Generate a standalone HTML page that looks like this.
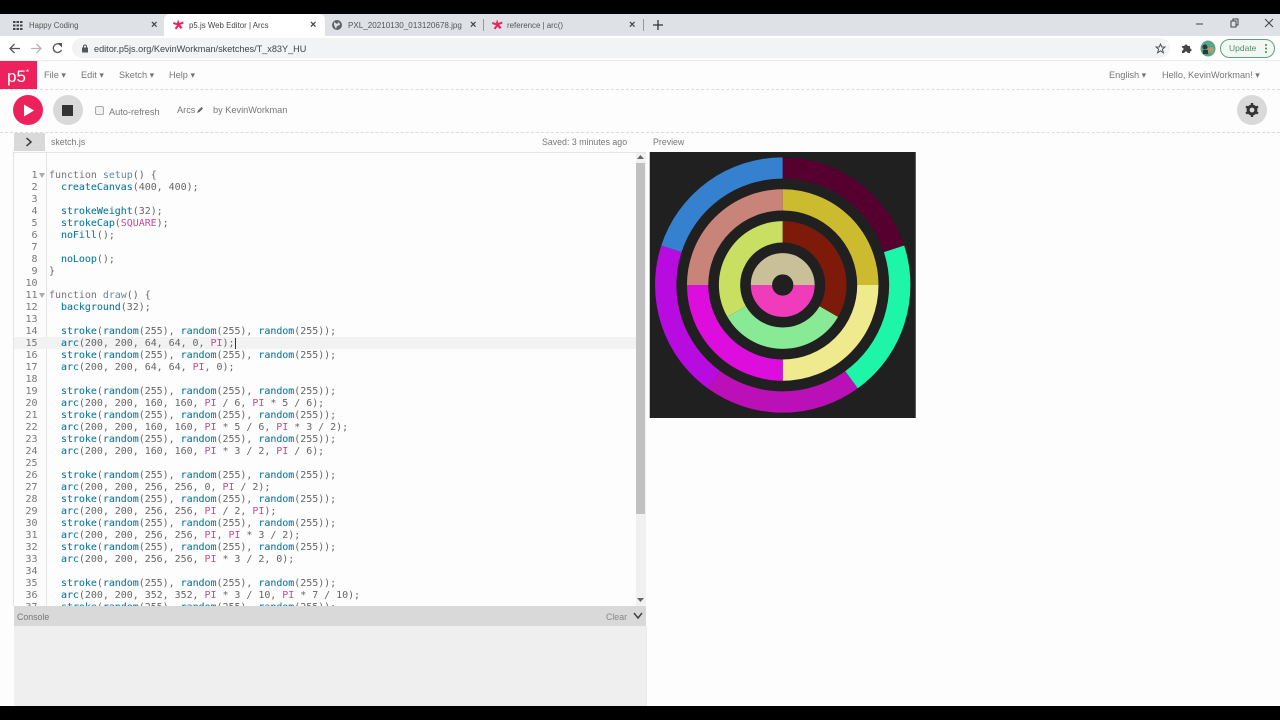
<!DOCTYPE html>
<html><head><meta charset="utf-8"><style>
html,body{margin:0;padding:0;width:1280px;height:720px;overflow:hidden;background:#fdfdfd;font-family:"Liberation Sans",sans-serif;color:#777}
.a{position:absolute;white-space:nowrap}
.t{font-size:7.9px;line-height:12px}
.u{font-size:9.2px;line-height:12px;color:#777}
pre{margin:0;font-family:"DejaVu Sans Mono","Liberation Mono",monospace;font-size:10px;line-height:12px;color:#666;letter-spacing:-.04px}
pre.a{white-space:pre}
pre i{font-style:normal;color:#0f7a9f;-webkit-text-stroke:.1px #0f7a9f}
pre b{font-weight:normal;color:#c84b8f}
pre u{text-decoration:none;color:#777}
pre s{text-decoration:none;color:#5d8ca0}
.dot{height:0;border-top:1px dashed #dcdcdc;left:0;width:1280px}
.x{font-size:11px;color:#444;line-height:12px;font-weight:bold}
</style></head><body>
<div class="a" style="left:0;top:0;width:1280px;height:14px;background:#000"></div>
<div class="a" style="left:0;top:14px;width:1280px;height:22px;background:#dee1e6"></div>
<div class="a" style="left:0;top:36px;width:1280px;height:25px;background:#fff"></div>
<div class="a" style="left:164px;top:14px;width:161px;height:22px;background:#fff;border-radius:6px 6px 0 0"></div>
<svg class="a" style="left:12px;top:20px" width="12" height="11"><g fill="#444"><rect x="1" y="1" width="2.500" height="2"/><rect x="4.500" y="1" width="2.500" height="2"/><rect x="8" y="1" width="2.500" height="2"/><rect x="1" y="4.500" width="2.500" height="2"/><rect x="4.500" y="4.500" width="2.500" height="2"/><rect x="8" y="4.500" width="2.500" height="2"/><rect x="1" y="8" width="2.500" height="2"/><rect x="4.500" y="8" width="2.500" height="2"/><rect x="8" y="8" width="2.500" height="2"/></g></svg>
<div class="a t" style="left:29px;top:20px;color:#555;font-size:7.800px">Happy Coding</div>
<div class="a x" style="left:151px;top:19px">×</div>
<svg class="a" style="left:172px;top:19px" width="12" height="12" viewBox="0 0 12 12"><path d="M6 .5l1.500 3.500 3.500-1.500 .5 2-3.300 1.300 2.300 3-1.800 1.200L6.500 7.500 4.500 10.500 2.700 9.300 5 6.300 1 5l.6-2L5 4.300z" fill="#ed225d"/></svg>
<div class="a t" style="left:189px;top:20px;color:#444">p5.js Web Editor | Arcs</div>
<div class="a x" style="left:310px;top:19px">×</div>
<svg class="a" style="left:332px;top:20px" width="10" height="10"><circle cx="5" cy="5" r="5" fill="#5f6368"/><path d="M2 2l3 2 2-2 1 3-3 1-1 3-2-4z" fill="#dee1e6"/></svg>
<div class="a t" style="left:348px;top:20px;width:116px;overflow:hidden;color:#555;font-size:8.100px">PXL_20210130_013120678.jpg (3024</div>
<div class="a x" style="left:470px;top:19px">×</div>
<div class="a" style="left:483px;top:19px;width:1px;height:12px;background:#999"></div>
<svg class="a" style="left:491px;top:19px" width="12" height="12" viewBox="0 0 12 12"><path d="M6 .5l1.500 3.500 3.500-1.500 .5 2-3.300 1.300 2.300 3-1.800 1.200L6.500 7.500 4.500 10.500 2.700 9.300 5 6.300 1 5l.6-2L5 4.300z" fill="#ed225d"/></svg>
<div class="a t" style="left:507px;top:20px;color:#555">reference | arc()</div>
<div class="a x" style="left:629px;top:19px">×</div>
<div class="a" style="left:643px;top:19px;width:1px;height:12px;background:#999"></div>
<svg class="a" style="left:653px;top:20px" width="10" height="10"><path d="M5 0v10M0 5h10" stroke="#333" stroke-width="1.300"/></svg>
<svg class="a" style="left:1195px;top:17px" width="80" height="14"><path d="M1 7h7" stroke="#444"/><path d="M36 4h5v6h-5zM38 4V2h5v6h-2" fill="none" stroke="#444"/><path d="M70 2l8 8M78 2l-8 8" stroke="#444"/></svg>

<svg class="a" style="left:8px;top:42px" width="60" height="13"><path d="M12 6.500H2M6.500 2L2 6.500 6.500 11" fill="none" stroke="#555" stroke-width="1.300"/><path d="M33 6.500H23M28.500 2L33 6.500 28.500 11" fill="none" stroke="#b5b5b5" stroke-width="1.300"/><path d="M53 3.500A4.300 4.300 0 1 0 53.500 8" fill="none" stroke="#555" stroke-width="1.300"/><path d="M49.500 1l4.500 0v4.500z" fill="#555"/></svg>
<div class="a" style="left:72px;top:38px;width:1098px;height:20px;background:#f1f3f4;border-radius:10px"></div>
<svg class="a" style="left:81px;top:44px" width="8" height="9"><rect x="1" y="3.500" width="6" height="5" fill="#555"/><path d="M2.500 4V2.500a1.500 1.500 0 0 1 3 0V4" fill="none" stroke="#555"/></svg>
<div class="a" style="left:94px;top:43px;font-size:9.150px;line-height:12px;color:#444">editor.p5js.org/KevinWorkman/sketches/T_x83Y_HU</div>
<svg class="a" style="left:1155px;top:43px" width="11" height="11" viewBox="0 0 11 11"><path d="M5.500 1l1.300 3h3.200L7.400 6.200 8.400 9.800 5.500 7.800 2.600 9.800 3.600 6.200 1 4h3.200z" fill="none" stroke="#555"/></svg>
<svg class="a" style="left:1181px;top:43px" width="11" height="11" viewBox="0 0 11 11"><path d="M1 3h2.500a1.500 1.500 0 0 1 3 0H9v2.500a1.500 1.500 0 0 1 0 3V10H6.500a1.500 1.500 0 0 0-3 0H1V7.500a1.500 1.500 0 0 0 0-3z" fill="#444"/></svg>
<svg class="a" style="left:1200px;top:40px" width="16" height="17"><ellipse cx="8" cy="8.500" rx="7.500" ry="8" fill="#5aa58a"/><circle cx="5" cy="7" r="2.500" fill="#333"/><circle cx="11" cy="10" r="3" fill="#b59a72"/><rect x="3" y="10" width="5" height="4" fill="#333"/></svg>
<div class="a" style="left:1220px;top:39px;width:53px;height:17px;border:1px solid #5f9d7c;border-radius:10px;background:#f2f7f3"></div>
<div class="a" style="left:1229px;top:42px;font-size:8.500px;line-height:12px;color:#4f8f6c">Update</div>
<svg class="a" style="left:1264px;top:43px" width="4" height="11"><g fill="#3c8a5f"><circle cx="2" cy="2" r="1"/><circle cx="2" cy="5.500" r="1"/><circle cx="2" cy="9" r="1"/></g></svg>

<div class="a" style="left:0;top:60px;width:1280px;height:1px;background:#ececec"></div>
<div class="a" style="left:0;top:61px;width:37px;height:28px;background:#ed225d"></div>
<div class="a" style="left:7px;top:63px;font-size:17px;line-height:20px;color:#fff">p5<span style="font-size:8px;vertical-align:7px">*</span></div>
<div class="a dot" style="top:89px"></div>
<div class="a u" style="left:44px;top:69px">File ▾</div>
<div class="a u" style="left:81px;top:69px">Edit ▾</div>
<div class="a u" style="left:119px;top:69px">Sketch ▾</div>
<div class="a u" style="left:169px;top:69px">Help ▾</div>
<div class="a u" style="left:1109px;top:69px">English ▾</div>
<div class="a u" style="left:1162px;top:69px">Hello, KevinWorkman! ▾</div>

<div class="a" style="left:13px;top:95px;width:30px;height:30px;border-radius:50%;background:#ed225d"></div>
<svg class="a" style="left:23px;top:104px" width="12" height="13"><path d="M1 .5L11 6.500 1 12.500z" fill="#fff"/></svg>
<div class="a" style="left:53px;top:95px;width:30px;height:30px;border-radius:50%;background:#d9d9d9"></div>
<div class="a" style="left:62px;top:105px;width:11px;height:11px;background:#333"></div>
<div class="a" style="left:95px;top:106px;width:7px;height:7px;border:1px solid #aaa;border-radius:2px;background:#f2f2f2"></div>
<div class="a u" style="left:109px;top:106px">Auto-refresh</div>
<div class="a u" style="left:177px;top:104px">Arcs</div>
<svg class="a" style="left:196px;top:106px" width="8" height="8"><path d="M1 7l1-2.500L5.500 1 7 2.500 3.500 6z" fill="#666"/></svg>
<div class="a u" style="left:213px;top:104px">by KevinWorkman</div>
<div class="a" style="left:1237px;top:95px;width:30px;height:30px;border-radius:50%;background:#d9d9d9"></div>
<svg class="a" style="left:1244px;top:102px" width="16" height="16" viewBox="0 0 16 16"><g stroke="#333" stroke-width="2.400"><path d="M8 1v14M2 4.500l12 7M14 4.500l-12 7"/></g><circle cx="8" cy="8" r="3.900" fill="#d9d9d9" stroke="#333" stroke-width="3"/></svg>
<div class="a dot" style="top:132px"></div>

<div class="a" style="left:14px;top:133px;width:31px;height:18px;background:#d9d9d9"></div>
<svg class="a" style="left:25px;top:137px" width="8" height="10"><path d="M1.500 1l4.500 4-4.500 4" fill="none" stroke="#333" stroke-width="1.500"/></svg>
<div class="a u" style="left:51px;top:136px;font-size:8.800px">sketch.js</div>
<div class="a u" style="left:542px;top:136px;font-size:8.800px">Saved: 3 minutes ago</div>
<div class="a u" style="left:653px;top:136px;font-size:8.800px">Preview</div>

<div class="a" style="left:13px;top:152px;width:633px;height:1px;background:#e4e4e4"></div>
<div class="a" style="left:13px;top:152px;width:1px;height:454px;background:#e4e4e4"></div>
<div class="a" style="left:46px;top:153px;width:1px;height:453px;background:#e4e4e4"></div>
<div class="a" style="left:14px;top:337px;width:622px;height:12px;background:#f2f2f2"></div>
<div class="a" style="left:235px;top:338px;width:1px;height:11px;background:#333"></div>
<div class="a" style="left:636px;top:153px;width:10px;height:453px;background:#f1f1f1"></div>
<div class="a" style="left:636px;top:163px;width:9px;height:351px;background:#c1c1c1"></div>
<svg class="a" style="left:637px;top:155px" width="7" height="5"><path d="M0 4l3.500-4L7 4z" fill="#666"/></svg>
<svg class="a" style="left:637px;top:598px" width="7" height="5"><path d="M0 0l3.500 4L7 0z" fill="#666"/></svg>
<svg class="a" style="left:39px;top:173px" width="6" height="5"><path d="M0 0h6L3 5z" fill="#aaa"/></svg>
<svg class="a" style="left:39px;top:293px" width="6" height="5"><path d="M0 0h6L3 5z" fill="#aaa"/></svg>

<div class="a" style="left:14px;top:153px;width:622px;height:453px;overflow:hidden">
<pre class="a" style="left:0;top:17px;width:23.500px;text-align:right;color:#777">1
2
3
4
5
6
7
8
9
10
11
12
13
14
15
16
17
18
19
20
21
22
23
24
25
26
27
28
29
30
31
32
33
34
35
36
37</pre>
<pre class="a" style="left:35px;top:17px"><u>function</u> <s>setup</s>() {
  <i>createCanvas</i>(400, 400);

  <i>strokeWeight</i>(32);
  <i>strokeCap</i>(<b>SQUARE</b>);
  <i>noFill</i>();

  <i>noLoop</i>();
}

<u>function</u> <s>draw</s>() {
  <i>background</i>(32);

  <i>stroke</i>(<i>random</i>(255), <i>random</i>(255), <i>random</i>(255));
  <i>arc</i>(200, 200, 64, 64, 0, <b>PI</b>);
  <i>stroke</i>(<i>random</i>(255), <i>random</i>(255), <i>random</i>(255));
  <i>arc</i>(200, 200, 64, 64, <b>PI</b>, 0);

  <i>stroke</i>(<i>random</i>(255), <i>random</i>(255), <i>random</i>(255));
  <i>arc</i>(200, 200, 160, 160, <b>PI</b> / 6, <b>PI</b> * 5 / 6);
  <i>stroke</i>(<i>random</i>(255), <i>random</i>(255), <i>random</i>(255));
  <i>arc</i>(200, 200, 160, 160, <b>PI</b> * 5 / 6, <b>PI</b> * 3 / 2);
  <i>stroke</i>(<i>random</i>(255), <i>random</i>(255), <i>random</i>(255));
  <i>arc</i>(200, 200, 160, 160, <b>PI</b> * 3 / 2, <b>PI</b> / 6);

  <i>stroke</i>(<i>random</i>(255), <i>random</i>(255), <i>random</i>(255));
  <i>arc</i>(200, 200, 256, 256, 0, <b>PI</b> / 2);
  <i>stroke</i>(<i>random</i>(255), <i>random</i>(255), <i>random</i>(255));
  <i>arc</i>(200, 200, 256, 256, <b>PI</b> / 2, <b>PI</b>);
  <i>stroke</i>(<i>random</i>(255), <i>random</i>(255), <i>random</i>(255));
  <i>arc</i>(200, 200, 256, 256, <b>PI</b>, <b>PI</b> * 3 / 2);
  <i>stroke</i>(<i>random</i>(255), <i>random</i>(255), <i>random</i>(255));
  <i>arc</i>(200, 200, 256, 256, <b>PI</b> * 3 / 2, 0);

  <i>stroke</i>(<i>random</i>(255), <i>random</i>(255), <i>random</i>(255));
  <i>arc</i>(200, 200, 352, 352, <b>PI</b> * 3 / 10, <b>PI</b> * 7 / 10);
  <i>stroke</i>(<i>random</i>(255), <i>random</i>(255), <i>random</i>(255));</pre>
</div>

<div class="a" style="left:14px;top:606px;width:632px;height:20px;background:#d9d9d9"></div>
<div class="a" style="left:14px;top:626px;width:632px;height:80px;background:#efefef"></div>
<div class="a u" style="left:17px;top:611px;font-size:8.800px">Console</div>
<div class="a u" style="left:606px;top:611px;font-size:8.800px;color:#888">Clear</div>
<svg class="a" style="left:633px;top:612px" width="10" height="8"><path d="M1 1l4 5 4-5" fill="none" stroke="#444" stroke-width="1.500"/></svg>

<svg class="a" style="left:649px;top:152px" width="267" height="266" viewBox="-201.100 -200 401.500 400">
<rect x="-200" y="-200" width="400" height="400" fill="#202020"/>
<g fill="none" stroke-width="32">
<path d="M32 0A32 32 0 0 1 -32 0" stroke="#f03cbb"/>
<path d="M-32 0A32 32 0 0 1 32 0" stroke="#c9c09a"/>
<path d="M69.280 40A80 80 0 0 1 -69.280 40" stroke="#88ea94"/>
<path d="M-69.280 40A80 80 0 0 1 0 -80" stroke="#c9df62"/>
<path d="M0 -80A80 80 0 0 1 69.280 40" stroke="#7e1a0a"/>
<path d="M128 0A128 128 0 0 1 0 128" stroke="#f0ea8e"/>
<path d="M0 128A128 128 0 0 1 -128 0" stroke="#dd0ddd"/>
<path d="M-128 0A128 128 0 0 1 0 -128" stroke="#c9847a"/>
<path d="M0 -128A128 128 0 0 1 128 0" stroke="#ccbb2e"/>
<path d="M103.450 142.390A176 176 0 0 1 -103.450 142.390" stroke="#bb0fb8"/>
<path d="M-103.450 142.390A176 176 0 0 1 -167.390 -54.390" stroke="#b80be0"/>
<path d="M-167.390 -54.390A176 176 0 0 1 0 -176" stroke="#3580cf"/>
<path d="M0 -176A176 176 0 0 1 167.390 -54.390" stroke="#560030"/>
<path d="M167.390 -54.390A176 176 0 0 1 103.450 142.390" stroke="#1df5a8"/>
</g>
</svg>
<div class="a" style="left:646px;top:626px;width:1px;height:80px;background:#eaeaea"></div>
<div class="a" style="left:0;top:706px;width:1280px;height:14px;background:#000"></div>
</body></html>
